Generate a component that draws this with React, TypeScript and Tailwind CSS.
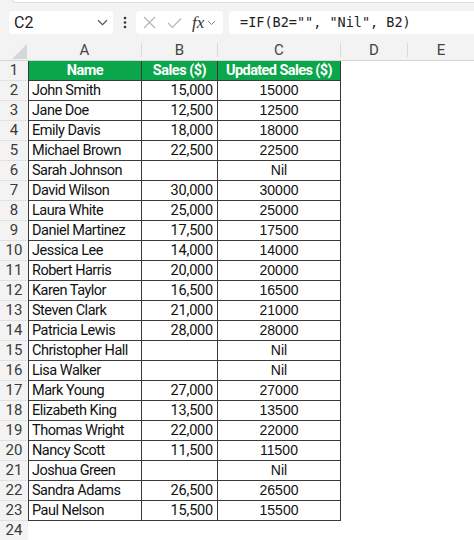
import React from "react";

type Row = [string, string, string];

const rows: Row[] = [
  ["John Smith", "15,000", "15000"],
  ["Jane Doe", "12,500", "12500"],
  ["Emily Davis", "18,000", "18000"],
  ["Michael Brown", "22,500", "22500"],
  ["Sarah Johnson", "", "Nil"],
  ["David Wilson", "30,000", "30000"],
  ["Laura White", "25,000", "25000"],
  ["Daniel Martinez", "17,500", "17500"],
  ["Jessica Lee", "14,000", "14000"],
  ["Robert Harris", "20,000", "20000"],
  ["Karen Taylor", "16,500", "16500"],
  ["Steven Clark", "21,000", "21000"],
  ["Patricia Lewis", "28,000", "28000"],
  ["Christopher Hall", "", "Nil"],
  ["Lisa Walker", "", "Nil"],
  ["Mark Young", "27,000", "27000"],
  ["Elizabeth King", "13,500", "13500"],
  ["Thomas Wright", "22,000", "22000"],
  ["Nancy Scott", "11,500", "11500"],
  ["Joshua Green", "", "Nil"],
  ["Sandra Adams", "26,500", "26500"],
  ["Paul Nelson", "15,500", "15500"],
];

const narrow = { fontFamily: '"Liberation Sans Narrow", "Roboto", sans-serif' };

function Chevron() {
  return (
    <svg width="11" height="7" viewBox="0 0 11 7" fill="none">
      <path d="M1 1.2 L5.5 5.6 L10 1.2" stroke="#555" strokeWidth="1.2" />
    </svg>
  );
}

function RowNum({ n }: { n: number }) {
  return (
    <div className="w-[28px] h-[20px] shrink-0 bg-[#f3f3f3] border-b border-[#e1e1e1] flex items-center justify-center text-[15px] text-[#3a3a3a] leading-none">
      {n}
    </div>
  );
}

export default function App() {
  return (
    <div className="w-[474px] h-[540px] overflow-hidden bg-white" style={narrow}>
      {/* top toolbar */}
      <div className="h-[40px] bg-[#f3f3f3] flex flex-col">
        <div className="h-[3px] ml-[12px] bg-white border-b border-l border-[#dcdcdc] rounded-bl-[4px]" />
        <div className="flex items-center mt-[8px] h-[23px]">
          <div className="ml-[9px] w-[104px] h-[23px] bg-white rounded-[4px] flex items-center justify-between pl-[5px] pr-[5px]">
            <span className="text-[16px] text-[#222]">C2</span>
            <Chevron />
          </div>
          <div className="w-[23px] flex justify-center">
            <svg width="4" height="13" viewBox="0 0 4 13">
              <circle cx="2" cy="2" r="1.3" fill="#333" />
              <circle cx="2" cy="6.5" r="1.3" fill="#333" />
              <circle cx="2" cy="11" r="1.3" fill="#333" />
            </svg>
          </div>
          <div className="w-[87px] h-[23px] bg-white rounded-[4px] flex items-center pl-[7px] pr-[3px]">
            <svg width="13" height="13" viewBox="0 0 13 13" fill="none">
              <path d="M1 1 L12 12 M12 1 L1 12" stroke="#b5b5b5" strokeWidth="1.2" />
            </svg>
            <svg className="ml-[11px]" width="15" height="12" viewBox="0 0 15 12" fill="none">
              <path d="M1 6 L5.5 10.5 L14 1.5" stroke="#b5b5b5" strokeWidth="1.2" />
            </svg>
            <span
              className="ml-[10px] text-[17px] italic leading-none text-[#333]"
              style={{ fontFamily: '"Liberation Serif", serif' }}
            >
              fx
            </span>
            <span className="ml-[3px]">
              <svg width="9" height="6" viewBox="0 0 9 6" fill="none">
                <path d="M1 1 L4.5 4.6 L8 1" stroke="#888" strokeWidth="1" />
              </svg>
            </span>
          </div>
          <div className="ml-[6px] flex-1 h-[23px] bg-white rounded-l-[4px] flex items-center pl-[11px]">
            <span
              className="text-[13.5px] text-[#222] whitespace-pre"
              style={{ fontFamily: '"DejaVu Sans Mono", monospace' }}
            >
              {'=IF(B2="", "Nil", B2)'}
            </span>
          </div>
        </div>
      </div>

      {/* column headers */}
      <div className="flex h-[21px] bg-[#f3f3f3] border-b border-[#d4d4d4] text-[15px] text-[#444]">
        <div className="w-[28px] h-full relative">
          <svg className="absolute left-[12px] top-[4px]" width="15" height="15" viewBox="0 0 15 15">
            <path d="M15 0 L15 15 L0 15 Z" fill="#d6d6d6" />
          </svg>
        </div>
        <div className="w-[114px] flex items-center justify-center border-r border-[#dadada] my-[3px]">A</div>
        <div className="w-[76px] flex items-center justify-center border-r border-[#dadada] my-[3px]">B</div>
        <div className="w-[123px] flex items-center justify-center border-r border-[#dadada] my-[3px]">C</div>
        <div className="w-[67px] flex items-center justify-center border-r border-[#dadada] my-[3px]">D</div>
        <div className="w-[66px] flex items-center justify-center">E</div>
      </div>

      {/* row 1 header */}
      <div className="flex h-[20px]">
        <RowNum n={1} />
        <div className="w-[114px] h-[20px] bg-[#0aa64b] border-l border-r border-b border-[#3a3a3a] flex items-center justify-center text-white font-bold text-[14.5px] tracking-[-0.5px]">
          Name
        </div>
        <div className="w-[76px] h-[20px] bg-[#0aa64b] border-r border-b border-[#3a3a3a] flex items-center justify-center text-white font-bold text-[14.5px] tracking-[-0.5px]">
          Sales ($)
        </div>
        <div className="w-[123px] h-[20px] bg-[#0aa64b] border-r border-b border-[#3a3a3a] flex items-center justify-center text-white font-bold text-[14.5px] tracking-[-0.6px] whitespace-nowrap">
          Updated Sales ($)
        </div>
      </div>

      {rows.map((r, i) => (
        <div key={i} className="flex h-[20px]">
          <RowNum n={i + 2} />
          <div className="w-[114px] h-[20px] border-l border-r border-b border-[#3a3a3a] flex items-center pl-[3px] text-[14.5px] tracking-[-0.5px] text-[#111] whitespace-nowrap">
            {r[0]}
          </div>
          <div className="w-[76px] h-[20px] border-r border-b border-[#3a3a3a] flex items-center justify-end pr-[4px] text-[14.5px] tracking-[-0.2px] text-[#111]">
            {r[1]}
          </div>
          <div
            className="w-[123px] h-[20px] border-r border-b border-[#3a3a3a] flex items-center justify-center text-[14px] text-[#111]"
            style={{ fontFamily: '"Liberation Sans", Arial, sans-serif' }}
          >
            {r[2]}
          </div>
        </div>
      ))}

      <div className="flex h-[20px]">
        <RowNum n={24} />
      </div>
    </div>
  );
}
